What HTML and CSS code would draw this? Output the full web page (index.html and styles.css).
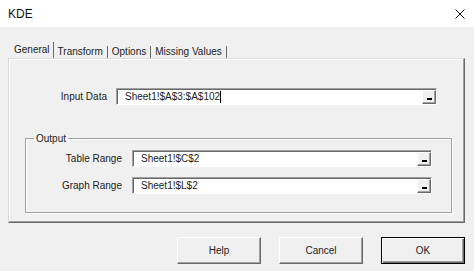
FILE: index.html
```html
<!DOCTYPE html>
<html lang="en">
<head>
    <meta charset="UTF-8">
    <title>KDE</title>
    <link rel="stylesheet" href="styles.css">
</head>
<body>
    <div class="window">
        <div class="titlebar">
            <span>KDE</span>
            <svg class="close" width="10" height="10" viewBox="0 0 10 10">
                <path d="M0.5 0.5 L9.5 9.5 M9.5 0.5 L0.5 9.5" stroke="#111" stroke-width="1" fill="none"/>
            </svg>
        </div>
        <div class="content">
            <div class="tabs">
                <div class="tab active">General</div>
                <div class="tab">Transform</div>
                <div class="tab">Options</div>
                <div class="tab">Missing Values</div>
            </div>
            <div class="page">
                <div class="field input-row">
                    <label>Input Data</label>
                    <div class="refedit">
                        <span class="value">Sheet1!$A$3:$A$102<span class="caret"></span></span>
                        <span class="refbtn"><i></i></span>
                    </div>
                </div>
                <fieldset class="group">
                    <legend>Output</legend>
                    <div class="field">
                        <label>Table Range</label>
                        <div class="refedit">
                            <span class="value">Sheet1!$C$2</span>
                            <span class="refbtn"><i></i></span>
                        </div>
                    </div>
                    <div class="field graph-row">
                        <label>Graph Range</label>
                        <div class="refedit">
                            <span class="value">Sheet1!$L$2</span>
                            <span class="refbtn"><i></i></span>
                        </div>
                    </div>
                </fieldset>
            </div>
            <div class="actions">
                <button class="btn">Help</button>
                <button class="btn">Cancel</button>
                <button class="btn default">OK</button>
            </div>
        </div>
    </div>
</body>
</html>
```

FILE: styles.css
```css
body {
    margin: 0;
    font-family: "Liberation Sans", Arial, sans-serif;
    font-size: 10px;
    color: #000;
}

.window {
    width: 474px;
    height: 271px;
    background-color: #f0f0f0;
    overflow: hidden;
}

.titlebar {
    height: 27px;
    background-color: #fff;
    display: flex;
    align-items: center;
    justify-content: space-between;
    padding: 0 9px 0 8px;
    font-size: 12px;
    color: #111;
}

.close {
    margin-top: 1px;
}

.content {
    padding: 14px 9px 0 8px;
}

.tabs {
    display: flex;
    align-items: flex-end;
    height: 17px;
}

.tab {
    height: 12px;
    line-height: 12px;
    padding: 0 4px;
    border-right: 1px solid #696969;
    color: #222;
}

.tab.active {
    height: 16px;
    line-height: 15px;
    padding: 0 3px 0 6px;
}

.page {
    height: 163px;
    border: 1px solid;
    border-color: #dadada #696969 #696969 #dadada;
    box-shadow: inset -1px -1px 0 #a0a0a0, inset 1px 1px 0 #fff;
}

.field {
    display: flex;
    align-items: center;
}

.field label {
    text-align: right;
    margin-right: 9px;
    color: #222;
}

.input-row {
    margin: 29px 27px 0 0;
}

.input-row label {
    width: 98px;
}

.refedit {
    flex: 1;
    height: 17px;
    box-sizing: border-box;
    background-color: #fff;
    border: 1px solid;
    border-color: #a0a0a0 #fff #fff #a0a0a0;
    box-shadow: inset 1px 1px 0 #696969;
    display: flex;
    justify-content: space-between;
}

.value {
    padding: 2px 0 0 8px;
    line-height: 12px;
    color: #222;
}

.caret {
    display: inline-block;
    width: 1px;
    height: 12px;
    background-color: #000;
    vertical-align: top;
}

.refbtn {
    width: 14px;
    box-sizing: border-box;
    margin-top: 1px;
    background-color: #f0f0f0;
    border: 1px solid;
    border-color: #fff #696969 #696969 #fff;
    box-shadow: inset -1px -1px 0 #a0a0a0;
    display: flex;
    align-items: flex-end;
    justify-content: center;
    padding-bottom: 3px;
}

.refbtn i {
    width: 5px;
    height: 2px;
    background-color: #000;
}

.group {
    margin: 28px 12px 0 16px;
    padding: 6px 19px 18px 0;
    border: 1px solid #a0a0a0;
    box-shadow: inset 1px 1px 0 #fff, 1px 1px 0 #fff;
}

.group legend {
    margin-left: 8px;
    padding: 0 2px;
    line-height: 11px;
    color: #222;
}

.group label {
    width: 96px;
    margin-right: 10px;
}

.graph-row {
    margin-top: 10px;
}

.actions {
    display: flex;
    justify-content: flex-end;
    gap: 18px;
    margin-top: 14px;
}

.btn {
    width: 84px;
    height: 27px;
    font-family: "Liberation Sans", Arial, sans-serif;
    font-size: 10px;
    color: #222;
    background-color: #f0f0f0;
    border: 1px solid;
    border-color: #fff #696969 #696969 #fff;
    box-shadow: inset -1px -1px 0 #a0a0a0;
    padding: 0;
}

.btn.default {
    border: 1px solid #000;
    box-shadow: inset 1px 1px 0 #fff, inset -1px -1px 0 #696969, inset -2px -2px 0 #a0a0a0;
}
```
